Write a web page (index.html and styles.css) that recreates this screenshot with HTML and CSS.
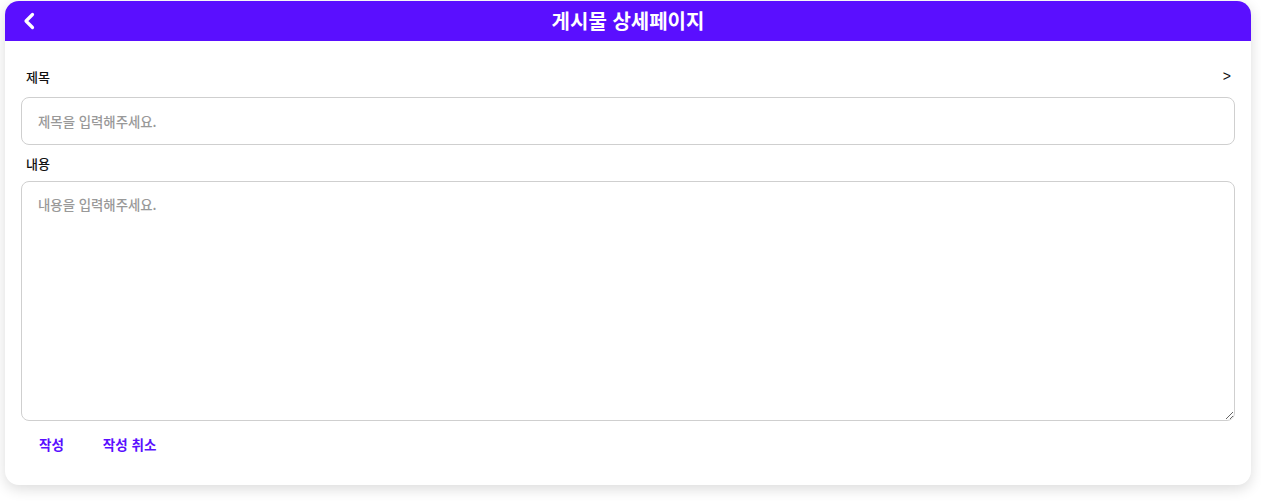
FILE: index.html
```html
<!DOCTYPE html>
<html lang="ko">
<head>
<meta charset="utf-8">
<title>게시물 상세페이지</title>
<link rel="stylesheet" href="styles.css">
</head>
<body>
<div class="card">
  <header class="topbar">
    <button class="back" aria-label="뒤로">
      <svg width="14" height="18" viewBox="0 0 14 18"><path d="M10.5 2.5 L4 9 L10.5 15.5" fill="none" stroke="#fff" stroke-width="3.2" stroke-linecap="round" stroke-linejoin="round"/></svg>
    </button>
    <h1 class="title">게시물 상세페이지</h1>
  </header>
  <main class="body">
    <div class="label-row first">
      <span class="label">제목</span>
      <span class="arrow">&gt;</span>
    </div>
    <input class="field" type="text" placeholder="제목을 입력해주세요.">
    <div class="label-row">
      <span class="label">내용</span>
    </div>
    <textarea class="field area" placeholder="내용을 입력해주세요."></textarea>
    <div class="actions">
      <button class="link">작성</button>
      <button class="link">작성 취소</button>
    </div>
  </main>
</div>
</body>
</html>
```
FILE: styles.css
```css
html, body {
  margin: 0;
  padding: 0;
  background: #ffffff;
}
body {
  padding: 1px 10px 0 5px;
  min-height: 500px;
  font-family: "Noto Sans CJK KR", "Noto Sans", sans-serif;
}
.card {
  width: 1246px;
  height: 484px;
  border-radius: 14px;
  background: #fff;
  box-shadow: 0 4px 14px rgba(0, 0, 0, 0.14);
  overflow: hidden;
  display: flex;
  flex-direction: column;
}
.topbar {
  height: 40px;
  background: #5a0fff;
  display: flex;
  align-items: center;
  justify-content: center;
  position: relative;
}
.back {
  position: absolute;
  left: 17px;
  top: 11px;
  padding: 0;
  border: 0;
  background: none;
  width: 14px;
  height: 18px;
  display: block;
}
.back svg { display: block; }
.title {
  margin: 0;
  color: #fff;
  font-size: 20px;
  font-weight: 700;
  line-height: 40px;
}
.body {
  padding: 24px 16px 0 16px;
  display: flex;
  flex-direction: column;
}
.label-row {
  display: flex;
  justify-content: space-between;
  align-items: center;
  padding: 0 4px 0 5px;
  height: 22px;
  margin-bottom: 7px;
}
.label-row.first {
  margin-bottom: 10px;
}
.label {
  font-size: 13px;
  font-weight: 500;
  color: #111;
}
.arrow {
  font-size: 14px;
  color: #111;
  font-family: "Liberation Sans", sans-serif;
}
.field {
  box-sizing: border-box;
  width: 1214px;
  height: 48px;
  border: 1px solid #cfcfcf;
  border-radius: 8px;
  padding: 0 16px;
  font-family: "Noto Sans CJK KR", sans-serif;
  font-size: 13.4px;
  font-weight: 500;
  color: #333;
  outline: none;
  margin: 0 0 7px 0;
}
.field::placeholder {
  color: #999999;
  font-weight: 500;
}
.area {
  height: 240px;
  padding: 12px 16px;
  resize: vertical;
  margin-bottom: 8px;
}
.actions {
  display: flex;
  gap: 39px;
  padding-left: 18px;
  height: 30px;
  align-items: center;
}
.link {
  border: 0;
  background: none;
  padding: 0;
  font-family: "Noto Sans CJK KR", sans-serif;
  font-size: 13.5px;
  font-weight: 700;
  color: #5a0fff;
}
```
